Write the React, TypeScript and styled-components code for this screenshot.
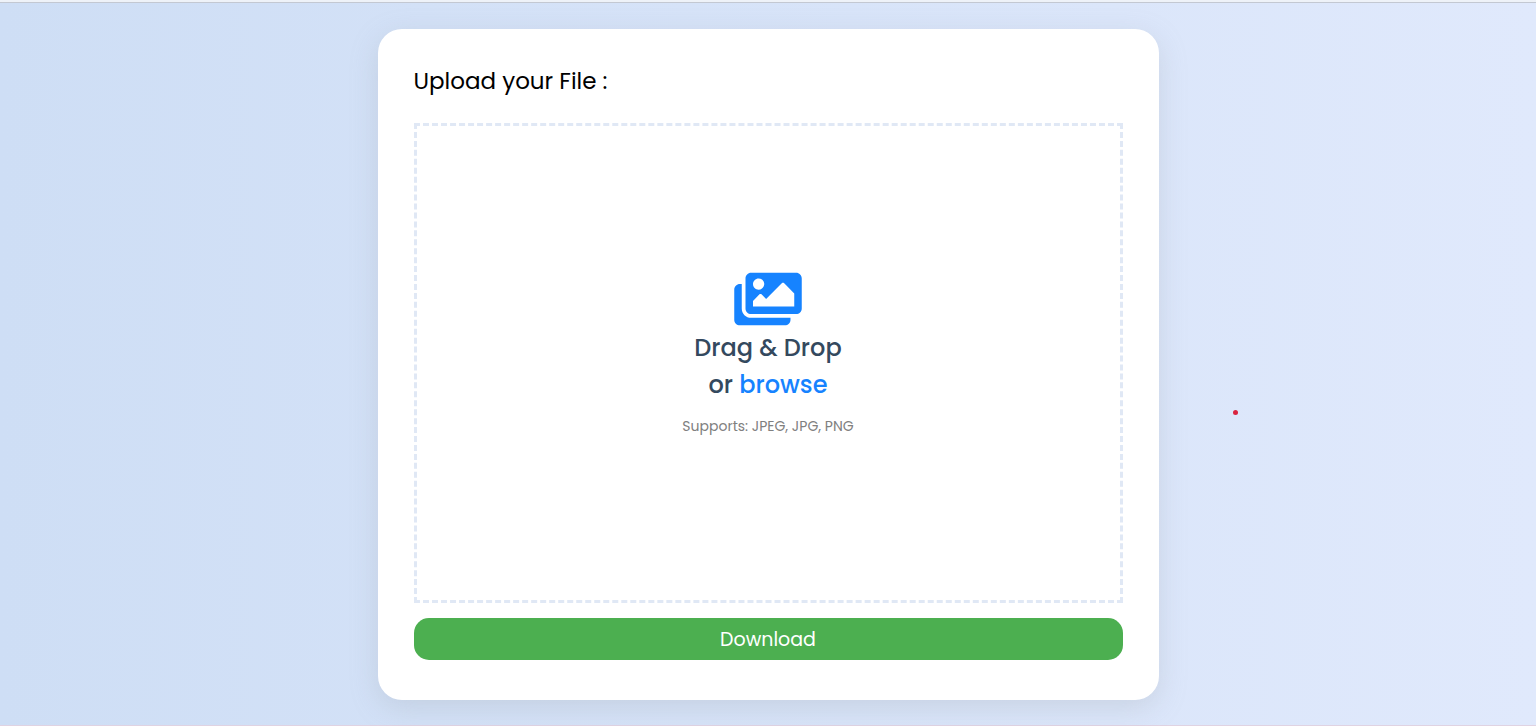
import React from "react";
import styled, { createGlobalStyle } from "styled-components";
import { FaImages } from "react-icons/fa";

const GlobalStyle = createGlobalStyle`
  * { box-sizing: border-box; }
  body {
    margin: 0;
    font-family: Poppins, Inter, "Open Sans", sans-serif;
    border-top: 2px solid #eef2f8;
  }
`;

const Page = styled.main`
  position: relative;
  min-height: calc(100vh - 2px);
  display: flex;
  flex-direction: column;
  align-items: center;
  padding: 26px 16px 25px;
  border-top: 1px solid #c3c8d2;
  border-bottom: 1px solid #e0d3e2;
  background: linear-gradient(to right, #cedef5, #e0e9fc);
`;

const Card = styled.section`
  width: 100%;
  max-width: 781px;
  padding: 36px 36px 40px;
  border-radius: 24px;
  background: #fff;
  box-shadow: 0 8px 28px rgba(149, 157, 165, 0.25);
`;

const Title = styled.h1`
  margin: 0 0 26px;
  font-size: 23px;
  line-height: 32px;
  font-weight: 400;
  color: #000;
`;

const DropArea = styled.div`
  height: 480px;
  padding-bottom: 20px;
  display: flex;
  flex-direction: column;
  align-items: center;
  justify-content: center;
  border: 3px dashed #e0e8f5;
`;

const ImagesIcon = styled(FaImages)`
  width: 68px;
  height: 60px;
  color: #1683ff;
`;

const Prompt = styled.p`
  margin: 0;
  font-size: 24px;
  line-height: 37px;
  font-weight: 500;
  color: #34495e;
`;

const BrowseLabel = styled.label`
  color: #1683ff;
  cursor: pointer;
`;

const FileInput = styled.input`
  position: absolute;
  width: 1px;
  height: 1px;
  opacity: 0;
  overflow: hidden;
`;

const Supports = styled.p`
  margin: 12px 0 0;
  font-size: 14px;
  line-height: 22px;
  color: #808080;
`;

const DownloadButton = styled.button`
  display: block;
  width: 100%;
  height: 42px;
  margin-top: 15px;
  padding: 0;
  border: 0;
  border-radius: 15px;
  background: #4caf50;
  color: #fff;
  font-family: inherit;
  font-size: 19px;
  cursor: pointer;
`;

const Marker = styled.span`
  position: absolute;
  left: 80.3%;
  top: 56.4%;
  width: 5px;
  height: 5px;
  border-radius: 50%;
  background: #d9233f;
`;

export default function App() {
  return (
    <>
      <GlobalStyle />
      <Page>
        <Card>
          <Title>Upload your File :</Title>
          <DropArea>
            <ImagesIcon aria-hidden="true" />
            <Prompt>Drag &amp; Drop</Prompt>
            <Prompt>
              or <BrowseLabel htmlFor="file">browse</BrowseLabel>
              <FileInput id="file" type="file" accept=".jpeg,.jpg,.png" />
            </Prompt>
            <Supports>Supports: JPEG, JPG, PNG</Supports>
          </DropArea>
          <DownloadButton type="button">Download</DownloadButton>
        </Card>
        <Marker />
      </Page>
    </>
  );
}
